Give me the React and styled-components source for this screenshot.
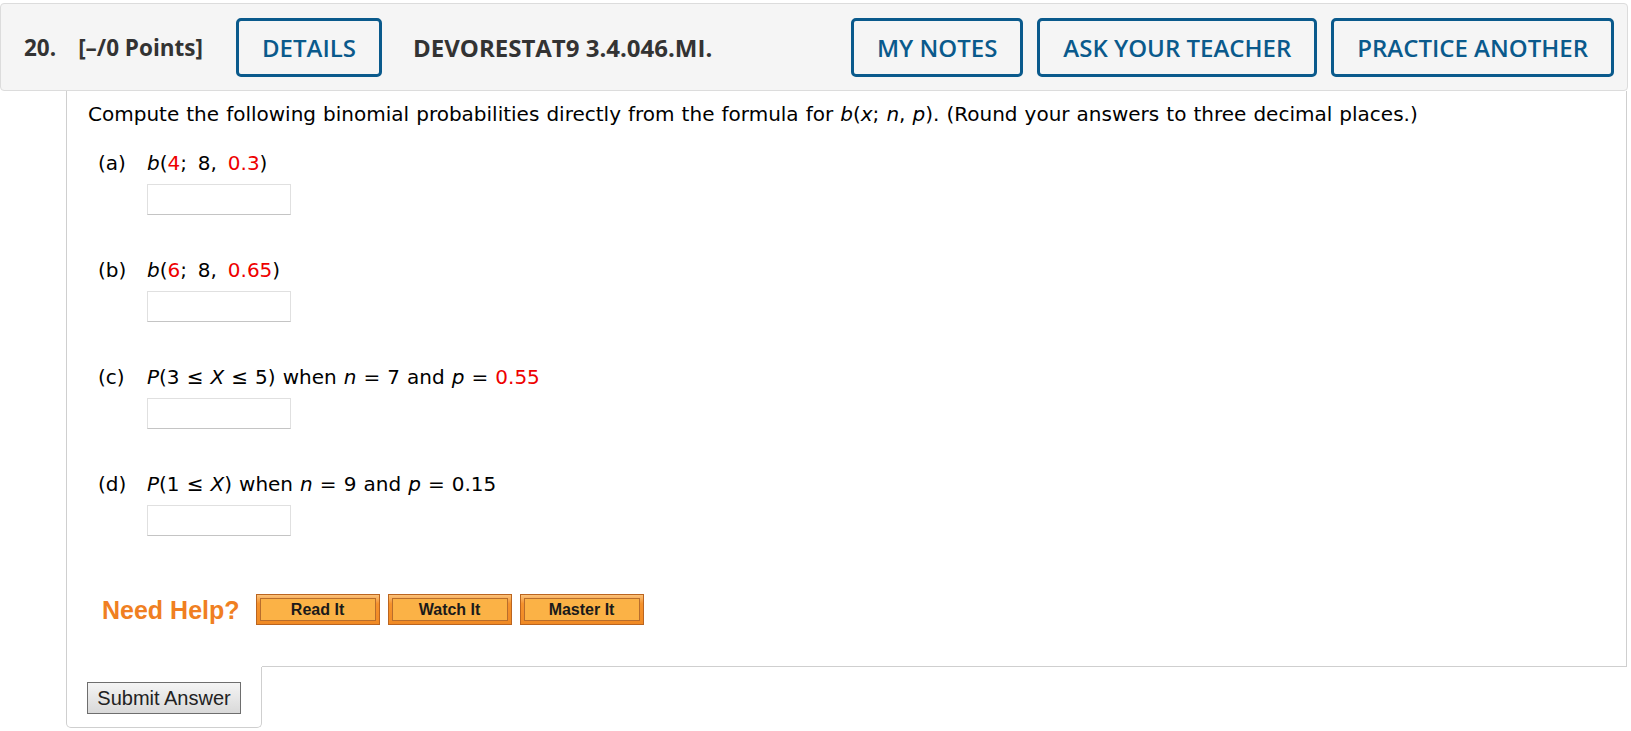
import React from 'react';
import styled, { createGlobalStyle } from 'styled-components';

const GlobalStyle = createGlobalStyle`
  body {
    margin: 0;
    background: #fff;
    font-family: "DejaVu Sans", sans-serif;
  }
`;

const Page = styled.div`
  width: 1628px;
  padding-top: 3px;
`;

const Header = styled.div`
  display: flex;
  align-items: center;
  height: 88px;
  box-sizing: border-box;
  padding: 0 13px 0 23px;
  background: #f5f5f5;
  border: 1px solid #dcdcdc;
  border-radius: 4px;
  font-family: "Open Sans", sans-serif;
  color: #333;
`;

const HeadText = styled.span`
  font-size: ${(props) => props.size || 23}px;
  font-weight: 700;
  margin-right: ${(props) => props.gap || 0}px;
  margin-left: ${(props) => props.lead || 0}px;
`;

const OutlineButton = styled.button`
  height: 59px;
  padding: 0 23px;
  margin-left: ${(props) => props.gap || 0}px;
  background: #f5f5f5;
  border: 3px solid #0a5a8c;
  border-radius: 5px;
  color: #0a5a8c;
  font-family: "Open Sans", sans-serif;
  font-size: 24px;
  font-weight: 600;
  cursor: pointer;
`;

const Spacer = styled.div`
  flex: 1;
`;

const Panel = styled.div`
  margin-left: 66px;
  margin-right: 1px;
  padding: 11px 21px 42px;
  border-left: 1px solid #cfcfcf;
  border-right: 1px solid #cfcfcf;
  font-family: "DejaVu Sans", sans-serif;
  font-size: 20px;
  word-spacing: 0.7px;
  line-height: 24px;
  color: #000;
`;

const Prompt = styled.div`
  white-space: nowrap;
`;

const PartList = styled.div`
  display: flex;
  flex-direction: column;
  gap: 43px;
  margin-top: 25px;
  padding-left: 10px;
`;

const Part = styled.div`
  display: grid;
  grid-template-columns: 49px auto;
  row-gap: 9px;
  justify-content: start;
`;

const Expr = styled.span`
  white-space: pre;
  word-spacing: ${(props) => (props.loose ? 4.5 : 0.7)}px;
`;

const Red = styled.span`
  color: #ee0000;
`;

const AnswerBox = styled.input`
  grid-column: 2;
  width: 144px;
  height: 31px;
  box-sizing: border-box;
  border: 1px solid #e0e0e0;
  border-bottom-color: #c4c4c4;
  background: #fff;
`;

const HelpRow = styled.div`
  display: flex;
  align-items: center;
  gap: 8px;
  margin-top: 58px;
  padding-left: 14px;
  word-spacing: 0;
`;

const HelpLabel = styled.span`
  font-family: "Liberation Sans", Arial, sans-serif;
  font-weight: 700;
  font-size: 25px;
  color: #f07f22;
  margin-right: 8px;
`;

const HelpButton = styled.button`
  width: 124px;
  height: 31px;
  padding: 3px;
  box-sizing: border-box;
  border: 1px solid #bb6520;
  background: linear-gradient(#fbc27a, #f5922c 30%, #f08a24);
  cursor: pointer;
`;

const HelpFace = styled.span`
  display: flex;
  align-items: center;
  justify-content: center;
  height: 100%;
  box-sizing: border-box;
  border: 1px solid #b86d2c;
  background: #fbb246;
  font-family: "Liberation Sans", Arial, sans-serif;
  font-weight: 700;
  font-size: 16px;
  color: #1a1a1a;
`;

const Footer = styled.div`
  display: flex;
  margin-left: 66px;
  margin-right: 1px;
`;

const Tab = styled.div`
  width: 196px;
  box-sizing: border-box;
  padding: 15px 0 13px 20px;
  border: 1px solid #cfcfcf;
  border-top: none;
  border-radius: 0 0 5px 5px;
`;

const Filler = styled.div`
  flex: 1;
  height: 0;
  border-top: 1px solid #cfcfcf;
  border-right: 1px solid #cfcfcf;
  border-bottom-right-radius: 4px;
  margin-top: -1px;
`;

const SubmitButton = styled.button`
  width: 154px;
  height: 32px;
  padding: 0;
  border: 1px solid #6e6e6e;
  background: linear-gradient(#f4f4f4, #d9d9d9);
  font-family: "Liberation Sans", Arial, sans-serif;
  font-size: 20px;
  color: #222;
  cursor: pointer;
`;

const parts = [
  { key: 'a', loose: true, expr: <><i>b</i>(<Red>4</Red>; 8, <Red>0.3</Red>)</> },
  { key: 'b', loose: true, expr: <><i>b</i>(<Red>6</Red>; 8, <Red>0.65</Red>)</> },
  {
    key: 'c',
    expr: <><i>P</i>(3 ≤ <i>X</i> ≤ 5) when <i>n</i> = 7 and <i>p</i> = <Red>0.55</Red></>,
  },
  { key: 'd', expr: <><i>P</i>(1 ≤ <i>X</i>) when <i>n</i> = 9 and <i>p</i> = 0.15</> },
];

const App = () => (
  <Page>
    <GlobalStyle />
    <Header>
      <HeadText size={22.5} gap={22}>20.</HeadText>
      <HeadText size={22.5} gap={33}>[–/0 Points]</HeadText>
      <OutlineButton>DETAILS</OutlineButton>
      <HeadText size={24} lead={31}>DEVORESTAT9 3.4.046.MI.</HeadText>
      <Spacer />
      <OutlineButton>MY NOTES</OutlineButton>
      <OutlineButton gap={14}>ASK YOUR TEACHER</OutlineButton>
      <OutlineButton gap={14}>PRACTICE ANOTHER</OutlineButton>
    </Header>
    <Panel>
      <Prompt>
        Compute the following binomial probabilities directly from the formula for{' '}
        <i>b</i>(<i>x</i>; <i>n</i>, <i>p</i>). (Round your answers to three decimal places.)
      </Prompt>
      <PartList>
        {parts.map((p) => (
          <Part key={p.key}>
            <span>({p.key})</span>
            <Expr loose={p.loose}>{p.expr}</Expr>
            <AnswerBox type='text' />
          </Part>
        ))}
      </PartList>
      <HelpRow>
        <HelpLabel>Need Help?</HelpLabel>
        <HelpButton><HelpFace>Read It</HelpFace></HelpButton>
        <HelpButton><HelpFace>Watch It</HelpFace></HelpButton>
        <HelpButton><HelpFace>Master It</HelpFace></HelpButton>
      </HelpRow>
    </Panel>
    <Footer>
      <Tab>
        <SubmitButton type='button'>Submit Answer</SubmitButton>
      </Tab>
      <Filler />
    </Footer>
  </Page>
);

export default App;
